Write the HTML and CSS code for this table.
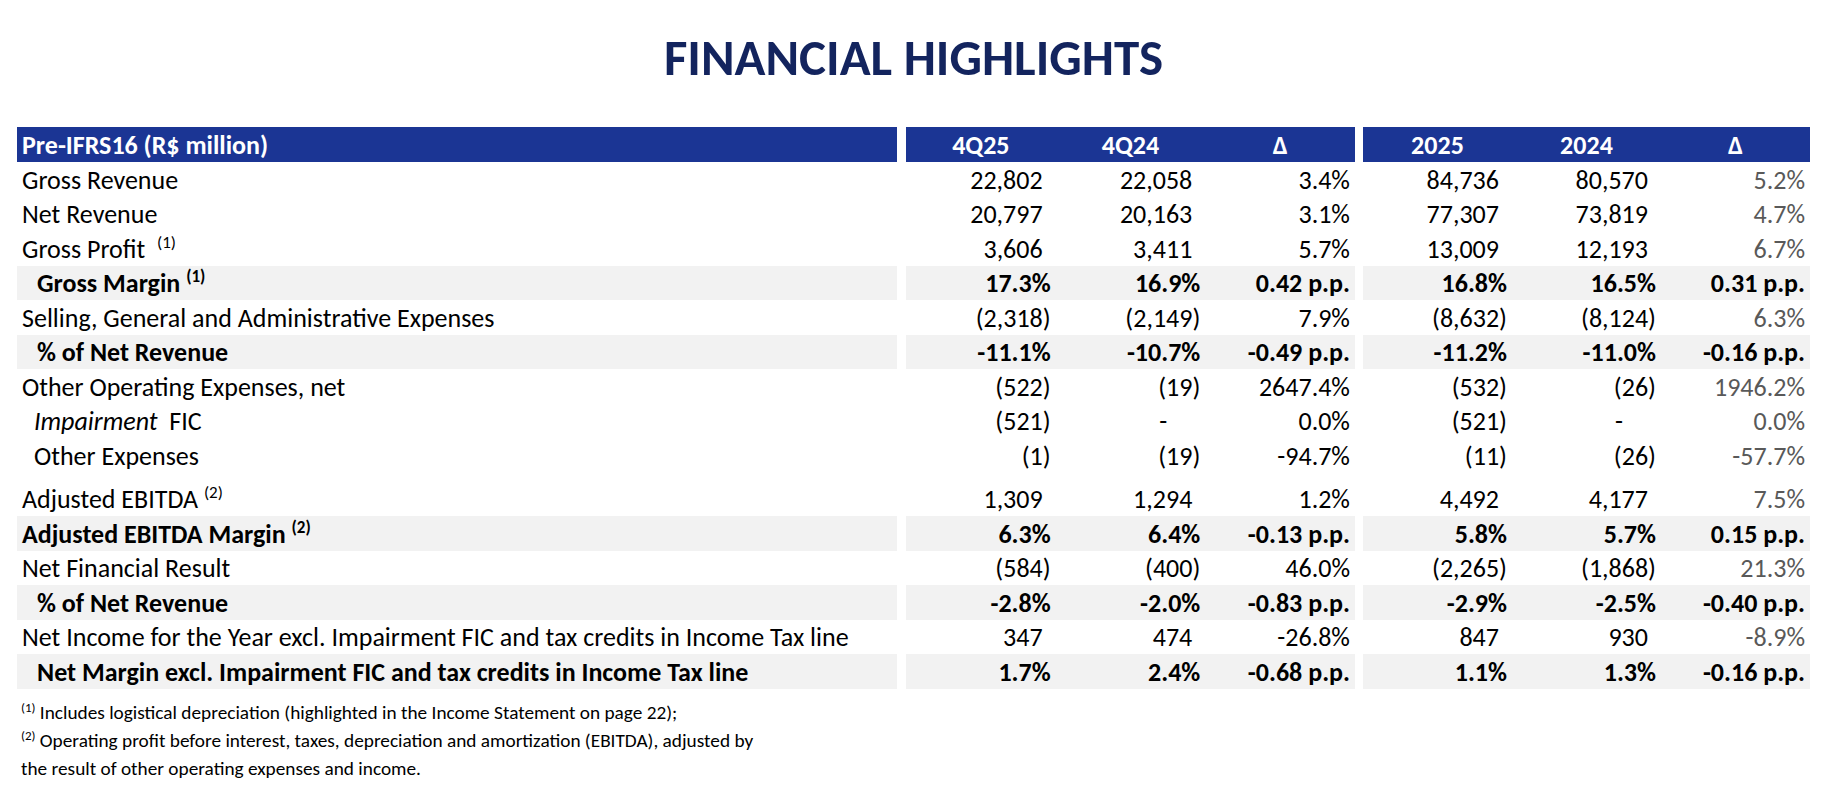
FILE: index.html
```html
<!DOCTYPE html>
<html lang="en">
<head>
  <meta charset="UTF-8">
  <title>Financial Highlights</title>
  <link rel="stylesheet" href="styles.css">
</head>
<body>
  <div class="page">
    <h1 class="title">FINANCIAL HIGHLIGHTS</h1>

    <table class="fin">
      <colgroup>
        <col class="col-label">
        <col class="col-gap">
        <col class="col-q"><col class="col-q"><col class="col-q">
        <col class="col-gap2">
        <col class="col-y"><col class="col-y"><col class="col-y">
      </colgroup>
      <thead>
        <tr>
          <th class="label">Pre-IFRS16 (R$ million)</th>
          <th class="gap"></th>
          <th>4Q25</th><th>4Q24</th><th>&Delta;</th>
          <th class="gap"></th>
          <th>2025</th><th>2024</th><th>&Delta;</th>
        </tr>
      </thead>
      <tbody>
        <tr>
          <td class="label">Gross Revenue</td><td class="gap"></td>
          <td class="a">22,802</td><td class="a">22,058</td><td>3.4%</td><td class="gap"></td>
          <td class="a">84,736</td><td class="a">80,570</td><td class="dim">5.2%</td>
        </tr>
        <tr>
          <td class="label">Net Revenue</td><td class="gap"></td>
          <td class="a">20,797</td><td class="a">20,163</td><td>3.1%</td><td class="gap"></td>
          <td class="a">77,307</td><td class="a">73,819</td><td class="dim">4.7%</td>
        </tr>
        <tr>
          <td class="label">Gross Profit &nbsp;<sup>(1)</sup></td><td class="gap"></td>
          <td class="a">3,606</td><td class="a">3,411</td><td>5.7%</td><td class="gap"></td>
          <td class="a">13,009</td><td class="a">12,193</td><td class="dim">6.7%</td>
        </tr>
        <tr class="hl">
          <td class="label sub">Gross Margin <sup>(1)</sup></td><td class="gap"></td>
          <td>17.3%</td><td>16.9%</td><td>0.42 p.p.</td><td class="gap"></td>
          <td>16.8%</td><td>16.5%</td><td>0.31 p.p.</td>
        </tr>
        <tr>
          <td class="label">Selling, General and Administrative Expenses</td><td class="gap"></td>
          <td>(2,318)</td><td>(2,149)</td><td>7.9%</td><td class="gap"></td>
          <td>(8,632)</td><td>(8,124)</td><td class="dim">6.3%</td>
        </tr>
        <tr class="hl">
          <td class="label sub">% of Net Revenue</td><td class="gap"></td>
          <td>-11.1%</td><td>-10.7%</td><td>-0.49 p.p.</td><td class="gap"></td>
          <td>-11.2%</td><td>-11.0%</td><td>-0.16 p.p.</td>
        </tr>
        <tr>
          <td class="label">Other Operating Expenses, net</td><td class="gap"></td>
          <td>(522)</td><td>(19)</td><td>2647.4%</td><td class="gap"></td>
          <td>(532)</td><td>(26)</td><td class="dim">1946.2%</td>
        </tr>
        <tr>
          <td class="label item"><i>Impairment</i>&nbsp; FIC</td><td class="gap"></td>
          <td>(521)</td><td class="dash">-</td><td>0.0%</td><td class="gap"></td>
          <td>(521)</td><td class="dash">-</td><td class="dim">0.0%</td>
        </tr>
        <tr>
          <td class="label item">Other Expenses</td><td class="gap"></td>
          <td>(1)</td><td>(19)</td><td>-94.7%</td><td class="gap"></td>
          <td>(11)</td><td>(26)</td><td class="dim">-57.7%</td>
        </tr>
        <tr class="tall">
          <td class="label">Adjusted EBITDA <sup>(2)</sup></td><td class="gap"></td>
          <td class="a">1,309</td><td class="a">1,294</td><td>1.2%</td><td class="gap"></td>
          <td class="a">4,492</td><td class="a">4,177</td><td class="dim">7.5%</td>
        </tr>
        <tr class="hl">
          <td class="label">Adjusted EBITDA Margin <sup>(2)</sup></td><td class="gap"></td>
          <td>6.3%</td><td>6.4%</td><td>-0.13 p.p.</td><td class="gap"></td>
          <td>5.8%</td><td>5.7%</td><td>0.15 p.p.</td>
        </tr>
        <tr>
          <td class="label">Net Financial Result</td><td class="gap"></td>
          <td>(584)</td><td>(400)</td><td>46.0%</td><td class="gap"></td>
          <td>(2,265)</td><td>(1,868)</td><td class="dim">21.3%</td>
        </tr>
        <tr class="hl">
          <td class="label sub">% of Net Revenue</td><td class="gap"></td>
          <td>-2.8%</td><td>-2.0%</td><td>-0.83 p.p.</td><td class="gap"></td>
          <td>-2.9%</td><td>-2.5%</td><td>-0.40 p.p.</td>
        </tr>
        <tr>
          <td class="label">Net Income for the Year excl. Impairment FIC and tax credits in Income Tax line</td><td class="gap"></td>
          <td class="a">347</td><td class="a">474</td><td>-26.8%</td><td class="gap"></td>
          <td class="a">847</td><td class="a">930</td><td class="dim">-8.9%</td>
        </tr>
        <tr class="hl">
          <td class="label sub">Net Margin excl. Impairment FIC and tax credits in Income Tax line</td><td class="gap"></td>
          <td>1.7%</td><td>2.4%</td><td>-0.68 p.p.</td><td class="gap"></td>
          <td>1.1%</td><td>1.3%</td><td>-0.16 p.p.</td>
        </tr>
      </tbody>
    </table>

    <div class="notes">
      <p><sup>(1)</sup> Includes logistical depreciation (highlighted in the Income Statement on page 22);</p>
      <p><sup>(2)</sup> Operating profit before interest, taxes, depreciation and amortization (EBITDA), adjusted by<br>the result of other operating expenses and income.</p>
    </div>
  </div>
</body>
</html>
```

FILE: styles.css
```css
body {
  margin: 0;
  padding: 0;
  background: #ffffff;
  font-family: Carlito, Calibri, Lato, sans-serif;
  color: #000000;
}

.page {
  width: 1793px;
  padding: 28px 0 0 17px;
}

.title {
  margin: 0;
  height: 99px;
  font-size: 51px;
  line-height: 60px;
  font-weight: 700;
  text-align: center;
  color: #13245e;
}

.fin {
  width: 1793px;
  table-layout: fixed;
  border-collapse: collapse;
  font-size: 26px;
}

.col-label { width: 880px; }
.col-gap { width: 9px; }
.col-gap2 { width: 8px; }
.col-q { width: 149.67px; }
.col-y { width: 149px; }

.fin th,
.fin td {
  padding: 0 5px 3px 0;
  height: 31.5px;
  line-height: 28px;
  vertical-align: bottom;
  text-align: right;
  white-space: nowrap;
}

.fin th {
  height: 35px;
  background: #1b3594;
  color: #ffffff;
  font-weight: 700;
  text-align: center;
  padding: 0;
  vertical-align: middle;
}

.fin th.label,
.fin td.label {
  text-align: left;
  padding-left: 5px;
}

.fin .gap {
  background: #ffffff;
  padding: 0;
}

.fin td.sub {
  padding-left: 20px;
}

.fin td.item {
  padding-left: 17px;
}

.fin td.a {
  padding-right: 13px;
}

.fin td.dash {
  padding-right: 38px;
}

.fin td.dim {
  color: #595959;
}

.fin tr.hl td {
  background: #f2f2f2;
  font-weight: 700;
}

.fin tr.hl td.gap {
  background: #ffffff;
}

.fin tr.tall td {
  height: 40.5px;
}

.fin sup {
  font-size: 17px;
  line-height: 0;
  vertical-align: 10px;
  font-weight: 400;
}

.fin tr.hl sup {
  font-weight: 700;
}

.notes {
  padding: 10px 0 0 4px;
  font-size: 19.3px;
  line-height: 28px;
}

.notes p {
  margin: 0;
}

.notes sup {
  font-size: 13px;
  line-height: 0;
  vertical-align: 7px;
}
```
